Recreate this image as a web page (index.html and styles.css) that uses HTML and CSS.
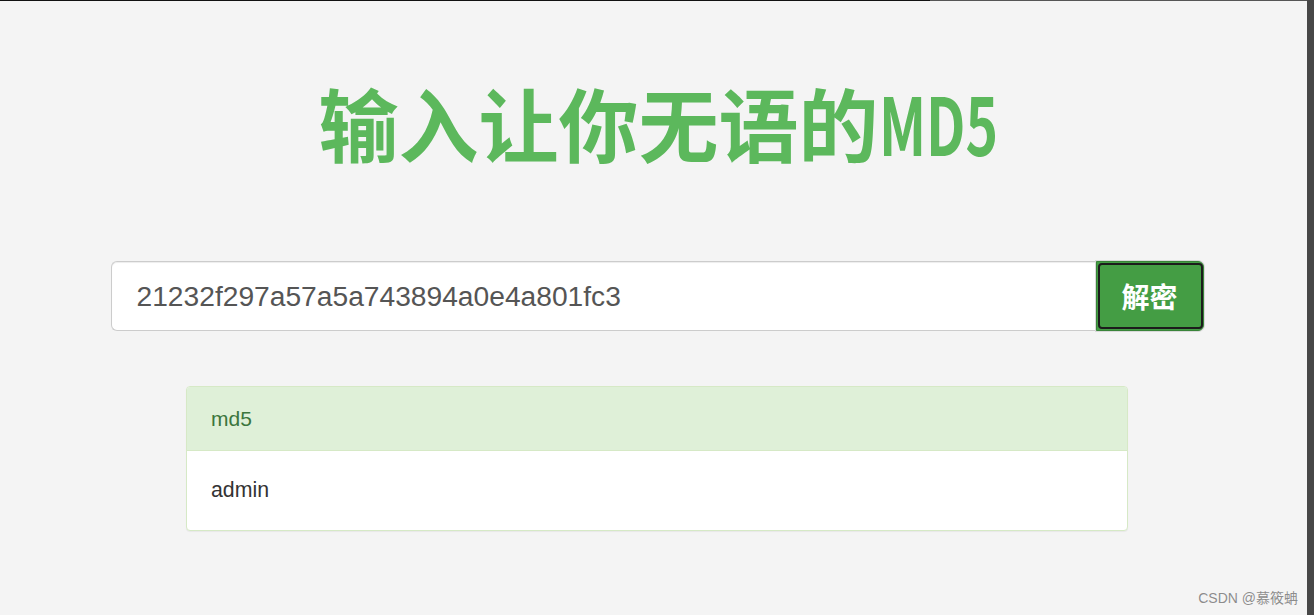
FILE: index.html
```html
<!DOCTYPE html>
<html lang="zh-CN">
<head>
<meta charset="utf-8">
<title>MD5</title>
<link rel="stylesheet" href="styles.css">
</head>
<body>
<div class="topline"></div>
<main class="page">
  <h1 class="title">输入让你无语的<span class="latin">MD5</span></h1>
  <form class="search">
    <input class="search-input" type="text" value="21232f297a57a5a743894a0e4a801fc3">
    <button class="search-btn" type="button">解密</button>
  </form>
  <section class="panel">
    <div class="panel-heading">md5</div>
    <div class="panel-body">admin</div>
  </section>
</main>
<div class="watermark">CSDN @慕筱蚺</div>
<div class="edge"></div>
</body>
</html>
```
FILE: styles.css
```css
html, body {
  margin: 0;
  padding: 0;
  height: 100%;
}
body {
  background: #f4f4f4;
  font-family: "Liberation Sans", Arial, "Noto Sans CJK SC", sans-serif;
  color: #333;
  position: relative;
  overflow: hidden;
}
.topline {
  height: 1px;
  background: linear-gradient(to right, #111 0, #111 930px, #555 930px, #555 100%);
}
.page {
  display: flex;
  flex-direction: column;
  align-items: center;
}
.title {
  margin: 80px 0 0;
  font-family: "Noto Sans CJK SC", sans-serif;
  font-weight: 700;
  font-size: 80px;
  line-height: 80px;
  color: #5cb85c;
  white-space: nowrap;
  letter-spacing: 0;
}
.latin {
  display: inline-block;
  width: 117px;
  transform: scaleX(0.69);
  transform-origin: left center;
  white-space: nowrap;
}
.search {
  margin: 100px 0 0;
  display: flex;
  width: 1093px;
  height: 70px;
}
.search-input {
  flex: 1;
  box-sizing: border-box;
  height: 70px;
  margin: 0;
  padding: 0 25px;
  border: 1px solid #ccc;
  border-right: none;
  border-radius: 6px 0 0 6px;
  background: #fff;
  box-shadow: inset 0 1px 1px rgba(0,0,0,.075);
  font-family: "Liberation Sans", Arial, sans-serif;
  font-size: 28.2px;
  color: #555;
  outline: none;
}
.search-btn {
  position: relative;
  box-sizing: border-box;
  width: 108px;
  height: 70px;
  margin: 0;
  padding: 0;
  border: 1px solid #398439;
  border-radius: 0 6px 6px 0;
  background: #449d44;
  color: #fff;
  font-family: "Noto Sans CJK SC", sans-serif;
  font-weight: 700;
  font-size: 28px;
  line-height: 1;
  box-shadow: 0 0 0 1px #d9d9d9;
}
.search-btn::after {
  content: "";
  position: absolute;
  left: 1px;
  top: 1px;
  right: 0;
  bottom: 1px;
  border: 2px solid #1c1c1c;
  border-radius: 4px;
}
.panel {
  margin-top: 55px;
  width: 942px;
  box-sizing: border-box;
  border: 1px solid #d6e9c6;
  border-radius: 4px;
  background: #fff;
  box-shadow: 0 1px 1px rgba(0,0,0,.05);
  overflow: hidden;
}
.panel-heading {
  height: 64px;
  box-sizing: border-box;
  padding: 0 24px;
  display: flex;
  align-items: center;
  background: #dff0d8;
  border-bottom: 1px solid #d6e9c6;
  color: #3c763d;
  font-size: 21px;
}
.panel-body {
  height: 79px;
  padding: 0 24px;
  display: flex;
  align-items: center;
  font-size: 21.3px;
  color: #333;
}
.watermark {
  position: absolute;
  right: 16px;
  bottom: 8px;
  font-family: "Liberation Sans", Arial, "Noto Sans CJK SC", sans-serif;
  font-size: 14px;
  color: #8c8c8c;
  text-shadow: 0 0 1px #fff;
}
.edge {
  position: absolute;
  top: 0;
  right: 0;
  bottom: 0;
  width: 7px;
  background: #474747;
}
```
